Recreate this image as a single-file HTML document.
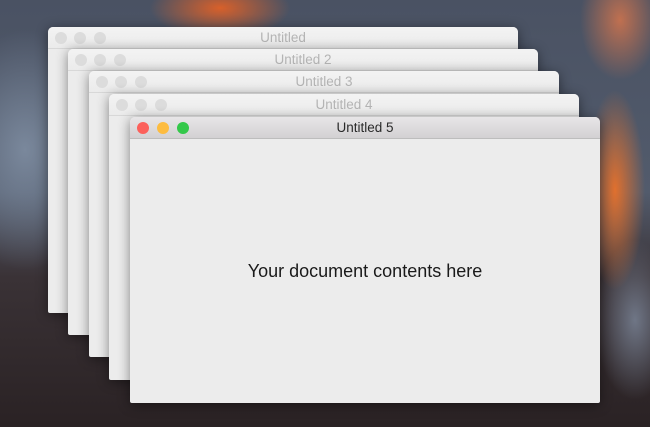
<!DOCTYPE html>
<html><head><style>
body{margin:0;width:650px;height:427px;overflow:hidden;position:relative;font-family:"Liberation Sans",sans-serif;
background:
radial-gradient(ellipse 70px 30px at 220px 8px,#d8602a,transparent),
radial-gradient(ellipse 40px 60px at 620px 20px,#c07050,transparent),
radial-gradient(ellipse 30px 100px at 615px 190px,#e0702e,transparent),
radial-gradient(ellipse 80px 120px at 25px 150px,#7a889c,transparent),
radial-gradient(ellipse 40px 80px at 635px 320px,#6f7686,transparent),
linear-gradient(180deg,#4a5263 0%,#525b6c 45%,#3a3236 65%,#2a2224 100%);}
.w{position:absolute;width:470px;height:286px;background:#ececec;border-radius:5px 5px 2px 2px;box-shadow:0 2px 12px rgba(0,0,0,.45);overflow:hidden}
.t{height:21px;background:linear-gradient(#f3f3f3,#ebebeb);border-bottom:1px solid #d8d8d8;text-align:center;font-size:13.5px;line-height:22px;color:#b4b4b4}
.d{position:absolute;top:5px;width:12px;height:12px;border-radius:50%;background:#dcdcdc}
.a .t{background:linear-gradient(#e8e6e8,#d3d1d3);border-bottom:1px solid #bdbdbd;color:#2a2a2a}
.c{position:absolute;left:0;right:0;top:144px;text-align:center;font-size:18px;color:#1a1a1a}
</style></head><body>
<div class="w" style="left:48px;top:27px"><div class="t">Untitled</div><i class="d" style="left:7px"></i><i class="d" style="left:26px"></i><i class="d" style="left:46px"></i></div>
<div class="w" style="left:68px;top:49px"><div class="t">Untitled 2</div><i class="d" style="left:7px"></i><i class="d" style="left:26px"></i><i class="d" style="left:46px"></i></div>
<div class="w" style="left:89px;top:71px"><div class="t">Untitled 3</div><i class="d" style="left:7px"></i><i class="d" style="left:26px"></i><i class="d" style="left:46px"></i></div>
<div class="w" style="left:109px;top:94px"><div class="t">Untitled 4</div><i class="d" style="left:7px"></i><i class="d" style="left:26px"></i><i class="d" style="left:46px"></i></div>
<div class="w a" style="left:130px;top:117px;height:286px"><div class="t">Untitled 5</div>
<i class="d" style="left:7px;background:#fc605b"></i><i class="d" style="left:27px;background:#fdbc40"></i><i class="d" style="left:47px;background:#34c84a"></i>
<div class="c">Your document contents here</div></div>
</body></html>
